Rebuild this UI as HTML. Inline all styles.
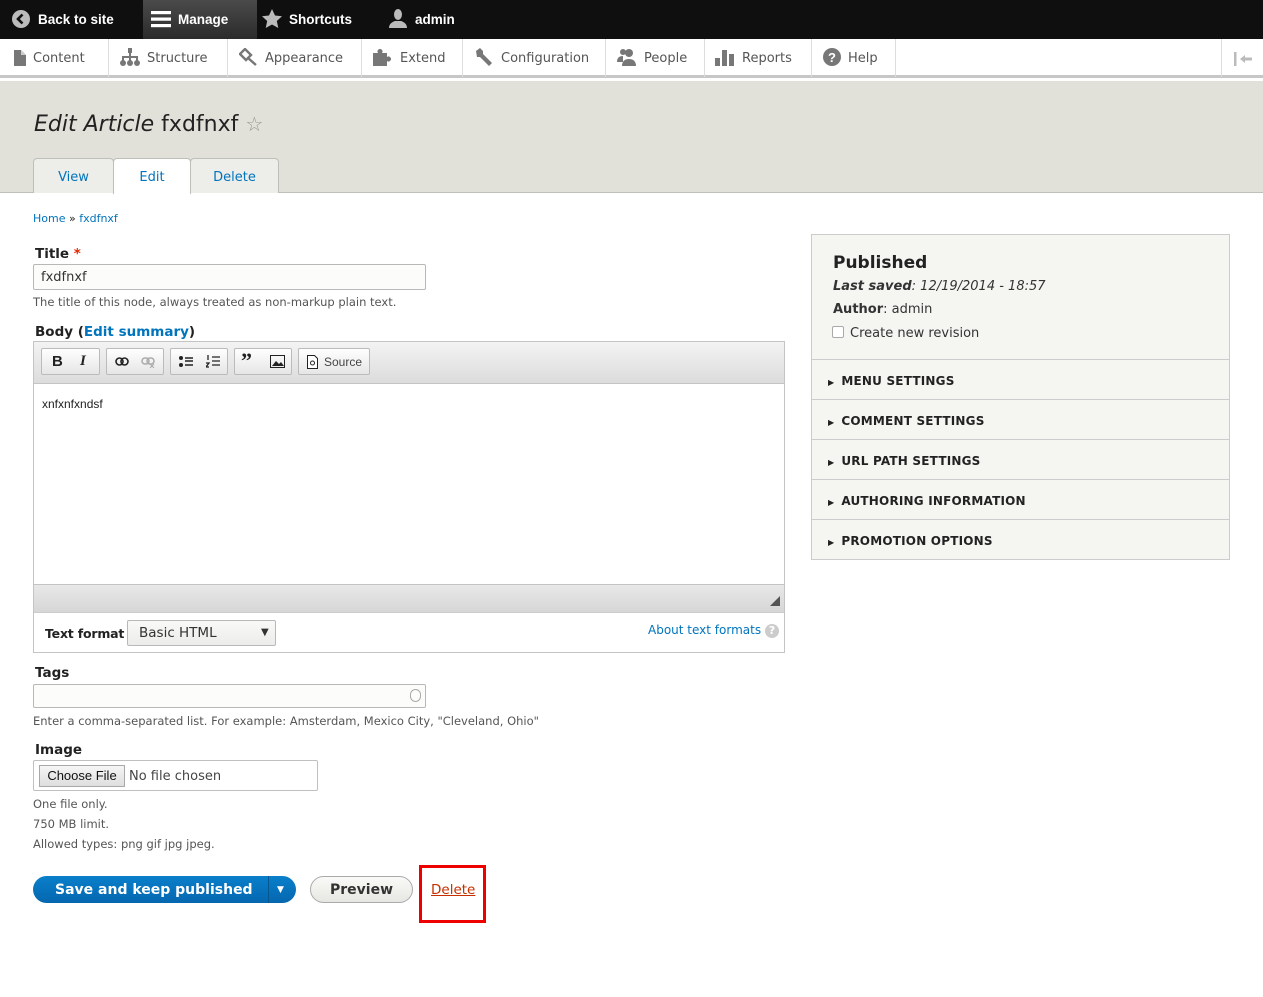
<!DOCTYPE html>
<html><head><meta charset="utf-8"><style>
*{box-sizing:border-box;margin:0;padding:0}
body{width:1263px;height:997px;position:relative;background:#fff;font-family:"DejaVu Sans","Liberation Sans",sans-serif;color:#222;font-size:13px;overflow:hidden}
.a{position:absolute;white-space:nowrap}
#tb{left:0;top:0;width:1263px;height:39px;background:#0f0f0f}
.tbi{position:absolute;top:0;height:39px;line-height:39px;color:#fff;font-weight:bold;font-size:13.5px;font-family:"Liberation Sans",sans-serif}
#tray{left:0;top:39px;width:1263px;height:39px;background:#fff;border-bottom:3px solid #c7c7c7}
.ti{position:absolute;top:0;height:38px;line-height:40px;color:#555;border-right:1px solid #ddd;font-family:"DejaVu Sans",sans-serif;font-size:13px}
.ti svg{vertical-align:-4px;margin-right:7px}
#hdr{left:0;top:81px;width:1263px;height:112px;background:#e1e0d9;border-bottom:1px solid #bfbfba}
.tab{position:absolute;top:158px;height:35px;line-height:37px;text-align:center;color:#0074bd;background:#edede9;border:1px solid #bfbfba;border-bottom:none;border-radius:4px 4px 0 0;font-size:13px}
.lbl{font-weight:bold;font-size:13.5px;color:#222}
.desc{font-size:11.5px;color:#555}
.inp{border:1px solid #b8b8b8;background:#fcfcfa;border-radius:2px}
.btn{display:inline-block;position:absolute;top:348px;height:27px;border:1px solid #bbb;border-radius:2px;background:linear-gradient(#fff,#e6e6e6)}
.sb{font-weight:bold;font-size:12px;letter-spacing:.2px;color:#222;font-family:"DejaVu Sans",sans-serif}
.sec{position:absolute;left:812px;width:417px;height:40px;border-top:1px solid #ccc;line-height:42px;padding-left:16px}
</style></head><body>
<div id="tb" class="a">
 <div class="tbi" style="left:0;width:143px;padding-left:12px"><svg width="18" height="18" viewBox="0 0 18 18" style="vertical-align:-4px;margin-right:8px"><circle cx="9" cy="9" r="9" fill="#bbb"/><path d="M10.5 4.5L6 9l4.5 4.5" stroke="#0f0f0f" stroke-width="2.6" fill="none"/></svg>Back to site</div>
 <div class="tbi" style="left:143px;width:114px;background:linear-gradient(#4a4a4a,#2b2b2b);padding-left:8px"><svg width="20" height="18" viewBox="0 0 20 18" style="vertical-align:-4px;margin-right:7px"><rect y="1" width="20" height="3.2" fill="#fff"/><rect y="7.5" width="20" height="3.2" fill="#fff"/><rect y="14" width="20" height="3.2" fill="#fff"/></svg>Manage</div>
 <div class="tbi" style="left:262px"><svg width="20" height="19" viewBox="0 0 20 19" style="vertical-align:-4px;margin-right:7px"><path d="M10 0l3 6.5 7 .8-5.2 4.7 1.5 7L10 15.5 3.7 19l1.5-7L0 7.3l7-.8z" fill="#bbb"/></svg>Shortcuts</div>
 <div class="tbi" style="left:389px"><svg width="18" height="19" viewBox="0 0 18 19" style="vertical-align:-4px;margin-right:8px"><ellipse cx="9" cy="5.5" rx="4" ry="5.5" fill="#bbb"/><path d="M0 19c0-4 3-6 6-7h6c3 1 6 3 6 7z" fill="#bbb"/></svg>admin</div>
</div>
<div id="tray" class="a">
 <div class="ti" style="left:0;width:109px;padding-left:14px"><svg width="12" height="16" viewBox="0 0 12 16"><path d="M0 0h7l5 5v11H0z" fill="#777"/><path d="M7 0v5h5" fill="#ccc"/></svg>Content</div>
 <div class="ti" style="left:109px;width:119px;padding-left:11px"><svg width="20" height="18" viewBox="0 0 20 18"><rect x="8" y="0" width="4" height="5" fill="#777"/><path d="M10 5v4M3 13V9h14v4M10 9v4" stroke="#777" stroke-width="2" fill="none"/><circle cx="3" cy="15" r="3" fill="#777"/><circle cx="10" cy="15" r="3" fill="#777"/><circle cx="17" cy="15" r="3" fill="#777"/></svg>Structure</div>
 <div class="ti" style="left:228px;width:134px;padding-left:11px"><svg width="19" height="18" viewBox="0 0 19 18"><path d="M1 6l5-5 6 6-5 5zM9 10l8 7" stroke="#777" stroke-width="2.4" fill="none"/></svg>Appearance</div>
 <div class="ti" style="left:362px;width:101px;padding-left:11px"><svg width="20" height="18" viewBox="0 0 20 18"><path d="M0 5h5a2.5 2.5 0 1 1 4 0h5v4a2.5 2.5 0 1 1 0 4v5H0z" fill="#777"/></svg>Extend</div>
 <div class="ti" style="left:463px;width:143px;padding-left:11px"><svg width="20" height="18" viewBox="0 0 20 18"><path d="M2 3l4-3 3 3v3l9 9-3 3-9-9H3z" fill="#777"/></svg>Configuration</div>
 <div class="ti" style="left:606px;width:99px;padding-left:11px"><svg width="20" height="18" viewBox="0 0 20 18"><circle cx="12" cy="5" r="4" fill="#777"/><path d="M5 18c0-5 3-7 7-7s7 2 7 7z" fill="#777"/><circle cx="6" cy="4" r="3" fill="#777"/><path d="M0 14c0-4 2-6 6-6v6z" fill="#777"/></svg>People</div>
 <div class="ti" style="left:705px;width:107px;padding-left:10px"><svg width="20" height="18" viewBox="0 0 20 18"><rect x="0" y="10" width="5" height="8" fill="#777"/><rect x="7" y="2" width="5" height="16" fill="#777"/><rect x="14" y="6" width="5" height="12" fill="#777"/></svg>Reports</div>
 <div class="ti" style="left:812px;width:84px;padding-left:11px"><svg width="18" height="18" viewBox="0 0 18 18"><circle cx="9" cy="9" r="9" fill="#777"/><text x="9" y="14" text-anchor="middle" font-size="13" font-weight="bold" fill="#fff" font-family="Liberation Sans">?</text></svg>Help</div>
 <div class="ti" style="left:1221px;width:42px;border-left:1px solid #ddd;border-right:none;padding-left:12px"><svg width="18" height="14" viewBox="0 0 18 14" style="margin:0"><rect x="0" y="0" width="2.5" height="14" fill="#bbb"/><path d="M6 7l5-4v2.5h7v3h-7V11z" fill="#bbb"/></svg></div>
</div>
<div id="hdr" class="a"></div>
<div class="a" style="left:34px;top:112px;font-size:22px;color:#222;font-family:'DejaVu Sans',sans-serif"><i>Edit Article</i> fxdfnxf <span style="color:#999;font-size:20px">☆</span></div>
<div class="tab" style="left:33px;width:81px">View</div>
<div class="tab" style="left:113px;width:78px;background:#fff;height:36px;z-index:2">Edit</div>
<div class="tab" style="left:190px;width:89px">Delete</div>

<div class="a" style="left:33px;top:212px;font-size:11px;color:#0074bd">Home <span style="color:#222">»</span> fxdfnxf</div>
<div class="a lbl" style="left:35px;top:246px">Title <span style="color:#e62600">*</span></div>
<div class="a inp" style="left:33px;top:264px;width:393px;height:26px;padding:5px 7px;font-size:13px;color:#333">fxdfnxf</div>
<div class="a desc" style="left:33px;top:295px">The title of this node, always treated as non-markup plain text.</div>
<div class="a lbl" style="left:35px;top:324px">Body (<span style="color:#0074bd">Edit summary</span>)</div>

<div class="a" style="left:33px;top:341px;width:752px;height:312px;border:1px solid #c4c4c4"></div>
<div class="a" style="left:34px;top:342px;width:750px;height:42px;background:linear-gradient(#f3f3f3,#dcdcdc);border-bottom:1px solid #c4c4c4"></div>
<div class="btn" style="left:41px;width:59px"><span class="a" style="left:10px;top:4px;font-weight:bold;font-size:15px;font-family:'Liberation Sans'">B</span><span class="a" style="left:38px;top:4px;font-style:italic;font-weight:bold;font-size:15px;font-family:'Liberation Serif'">I</span></div>
<div class="btn" style="left:106px;width:58px"><svg class="a" style="left:8px;top:8px" width="14" height="9" viewBox="0 0 14 9"><rect x="1" y="1" width="7" height="7" rx="3.5" fill="none" stroke="#222" stroke-width="1.6"/><rect x="6" y="1" width="7" height="7" rx="3.5" fill="none" stroke="#222" stroke-width="1.6"/></svg><svg class="a" style="left:34px;top:8px" width="14" height="11" viewBox="0 0 14 11"><rect x="1" y="1" width="7" height="6" rx="3" fill="none" stroke="#aaa" stroke-width="1.5"/><rect x="6" y="1" width="7" height="6" rx="3" fill="none" stroke="#aaa" stroke-width="1.5"/><path d="M9 7l4 4M13 7l-4 4" stroke="#aaa"/></svg></div>
<div class="btn" style="left:170px;width:58px"><svg class="a" style="left:8px;top:6px" width="14" height="13" viewBox="0 0 14 13"><circle cx="2" cy="3" r="2" fill="#222"/><circle cx="2" cy="10" r="2" fill="#222"/><path d="M6 3h8M6 10h8M6 6h8" stroke="#222" stroke-width="1.5"/></svg><svg class="a" style="left:35px;top:6px" width="14" height="13" viewBox="0 0 14 13"><path d="M2 0v5M0 8h3l-3 4h3M6 2h8M6 6h8M6 10h8" stroke="#222" stroke-width="1.3" fill="none"/></svg></div>
<div class="btn" style="left:234px;width:58px"><span class="a" style="left:6px;top:-1px;font-size:22px;font-weight:bold;font-family:'Liberation Serif'">”</span><svg class="a" style="left:35px;top:6px" width="15" height="13" viewBox="0 0 15 13"><rect x=".5" y=".5" width="14" height="12" fill="none" stroke="#222"/><path d="M2 11l4-5 3 3 2-2 3 4z" fill="#222"/></svg></div>
<div class="btn" style="left:298px;width:72px"><svg class="a" style="left:8px;top:6px" width="11" height="14" viewBox="0 0 11 14"><path d="M.5.5h7l3 3v10H.5z" fill="#fff" stroke="#222"/><circle cx="5.5" cy="8" r="2" fill="none" stroke="#222"/></svg><span class="a" style="left:25px;top:6px;font-size:12px;color:#444;font-family:'Liberation Sans'">Source</span></div>
<div class="a" style="left:42px;top:397px;font-size:12px;font-family:'Liberation Sans';color:#222">xnfxnfxndsf</div>
<div class="a" style="left:34px;top:584px;width:750px;height:29px;background:linear-gradient(#e8e8e8,#d6d6d6);border-top:1px solid #c4c4c4;border-bottom:1px solid #ccc"></div>
<div class="a" style="left:770px;top:596px;width:0;height:0;border-left:10px solid transparent;border-bottom:10px solid #555"></div>
<div class="a lbl" style="left:45px;top:626px;font-size:12.5px;letter-spacing:-.2px">Text format</div>
<div class="a" style="left:127px;top:620px;width:149px;height:26px;border:1px solid #b8b8b8;border-radius:2px;background:linear-gradient(#f9f9f7,#ececea);padding:4px 11px;font-size:13.5px;color:#333">Basic HTML<span class="a" style="left:133px;top:6px;font-size:10px">▼</span></div>
<div class="a" style="left:648px;top:623px;font-size:12px;color:#0074bd">About text formats <span style="display:inline-block;width:14px;height:14px;border-radius:7px;background:#ccc;color:#fff;text-align:center;font-size:11px;line-height:14px;font-weight:bold">?</span></div>

<div class="a lbl" style="left:35px;top:665px">Tags</div>
<div class="a inp" style="left:33px;top:684px;width:393px;height:24px"><span class="a" style="left:376px;top:4px;width:11px;height:13px;border:1.5px solid #aaa;border-radius:6px"></span></div>
<div class="a desc" style="left:33px;top:714px">Enter a comma-separated list. For example: Amsterdam, Mexico City, "Cleveland, Ohio"</div>
<div class="a lbl" style="left:35px;top:742px">Image</div>
<div class="a" style="left:33px;top:760px;width:285px;height:31px;border:1px solid #c0c0c0;border-radius:2px"></div>
<div class="a" style="left:39px;top:765px;width:86px;height:22px;border:1px solid #a9a9a9;background:linear-gradient(#f6f6f6,#dedede);font-family:'Liberation Sans';font-size:13px;text-align:center;line-height:20px;color:#111">Choose File</div>
<div class="a" style="left:129px;top:769px;font-size:13px;color:#444">No file chosen</div>
<div class="a desc" style="left:33px;top:797px">One file only.</div>
<div class="a desc" style="left:33px;top:817px">750 MB limit.</div>
<div class="a desc" style="left:33px;top:837px">Allowed types: png gif jpg jpeg.</div>

<div class="a" style="left:33px;top:876px;width:263px;height:27px;border-radius:14px;background:linear-gradient(#0a7fcb,#0567b0);color:#fff;font-weight:bold;font-size:14px;line-height:28px;padding-left:22px">Save and keep published<span class="a" style="left:235px;top:0;width:1px;height:27px;background:#04578f"></span><span class="a" style="left:244px;top:0;font-size:9px">▼</span></div>
<div class="a" style="left:310px;top:876px;width:103px;height:27px;border-radius:14px;border:1px solid #aaa;background:linear-gradient(#fafaf8,#e6e6e2);font-weight:bold;font-size:14px;line-height:26px;text-align:center;color:#333">Preview</div>
<div class="a" style="left:419px;top:865px;width:67px;height:58px;border:3px solid #e00"></div>
<div class="a" style="left:431px;top:882px;font-size:13.5px;color:#c33100;text-decoration:underline">Delete</div>

<div class="a" style="left:811px;top:234px;width:419px;height:326px;background:#f5f5f2;border:1px solid #ccc"></div>
<div class="a" style="left:833px;top:253px;font-size:17px;font-weight:bold;color:#222">Published</div>
<div class="a" style="left:833px;top:279px;font-size:13px;font-style:italic;color:#333"><b>Last saved</b>: 12/19/2014 - 18:57</div>
<div class="a" style="left:833px;top:302px;font-size:13px;color:#333"><b>Author</b>: admin</div>
<div class="a" style="left:832px;top:326px;font-size:13px;color:#333"><span style="display:inline-block;width:12px;height:12px;border:1px solid #aaa;border-radius:2px;background:#fff;vertical-align:-1px;margin-right:6px"></span>Create new revision</div>
<div class="sec sb" style="top:359px"><span style="font-size:8px;margin-right:7px">▶</span>MENU SETTINGS</div>
<div class="sec sb" style="top:399px"><span style="font-size:8px;margin-right:7px">▶</span>COMMENT SETTINGS</div>
<div class="sec sb" style="top:439px"><span style="font-size:8px;margin-right:7px">▶</span>URL PATH SETTINGS</div>
<div class="sec sb" style="top:479px"><span style="font-size:8px;margin-right:7px">▶</span>AUTHORING INFORMATION</div>
<div class="sec sb" style="top:519px"><span style="font-size:8px;margin-right:7px">▶</span>PROMOTION OPTIONS</div>
</body></html>
